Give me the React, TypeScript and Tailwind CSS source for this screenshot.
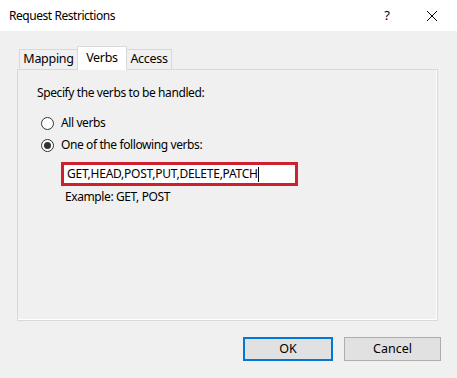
import React from "react";

const font = { fontFamily: '"Noto Sans", "Open Sans", sans-serif' };

function Radio({ checked }: { checked?: boolean }) {
  return (
    <span className="w-[13px] h-[13px] rounded-full border border-[#333333] bg-white flex items-center justify-center shrink-0">
      {checked && <span className="w-[7px] h-[7px] rounded-full bg-[#333333]" />}
    </span>
  );
}

export default function App() {
  return (
    <div
      className="w-[457px] h-[378px] bg-[#f0f0f0] flex flex-col text-[12px] text-black overflow-hidden"
      style={font}
    >
      {/* Title bar */}
      <div className="h-[31px] bg-white flex items-center pl-[9px] shrink-0">
        <span className="flex-1 tracking-[-0.45px]">Request Restrictions</span>
        <span className="w-[20px] text-center mr-[29px] text-[13px]">?</span>
        <svg width="12" height="12" viewBox="0 0 12 12" className="mr-[19px]">
          <path d="M1 1 L11 11 M11 1 L1 11" stroke="#000" strokeWidth="1" />
        </svg>
      </div>

      {/* Tabs */}
      <div className="flex flex-col pl-[17px] pt-[15px] w-[438px]">
        <div className="flex items-end pl-[2px] h-[24px] relative z-10 -mb-px">
          <div className="w-[58px] h-[20px] border border-[#d9d9d9] border-b-0 border-r-0 flex items-center justify-center text-[12.5px] tracking-[-0.3px] mb-px">
            Mapping
          </div>
          <div className="w-[50px] h-[24px] border border-[#d9d9d9] border-b-0 bg-white flex items-start pt-[2px] justify-center text-[12.5px] tracking-[-0.3px]">
            Verbs
          </div>
          <div className="w-[45px] h-[20px] border border-[#d9d9d9] border-b-0 border-l-0 flex items-center justify-center text-[12.5px] tracking-[-0.3px] mb-px">
            Access
          </div>
        </div>
        <div className="h-[252px] border border-[#d9d9d9]">
          <div className="h-full border-r border-b border-white flex flex-col pl-[19px] pt-[14px]">
            <div className="leading-[18px] tracking-[-0.4px]">Specify the verbs to be handled:</div>
            <div className="flex items-center gap-[7px] pl-[4px] mt-[12px] h-[18px] tracking-[-0.4px]">
              <Radio />
              <span>All verbs</span>
            </div>
            <div className="flex items-center gap-[7px] pl-[4px] mt-[4px] h-[18px] tracking-[-0.4px]">
              <Radio checked />
              <span>One of the following verbs:</span>
            </div>
            <div className="ml-[24px] mt-[8px] w-[237px] h-[24px] border-[3px] border-[#d01f2e] bg-white flex items-center pl-[3px]">
              <span className="tracking-[-0.25px]">GET,HEAD,POST,PUT,DELETE,PATCH</span>
              <span className="w-px h-[15px] bg-black" />
            </div>
            <div className="ml-[28px] mt-[2px] leading-[18px] tracking-[-0.4px]">Example: GET, POST</div>
          </div>
        </div>
      </div>

      {/* Buttons */}
      <div className="flex pl-[243px] mt-[16px] gap-[11px]">
        <button className="w-[90px] h-[24px] border-2 border-[#0078d7] bg-[#e1e1e1] flex items-center justify-center text-[12.5px]">
          OK
        </button>
        <button className="w-[97px] h-[24px] border border-[#adadad] bg-[#e1e1e1] flex items-center justify-center text-[12.5px]">
          Cancel
        </button>
      </div>
    </div>
  );
}
